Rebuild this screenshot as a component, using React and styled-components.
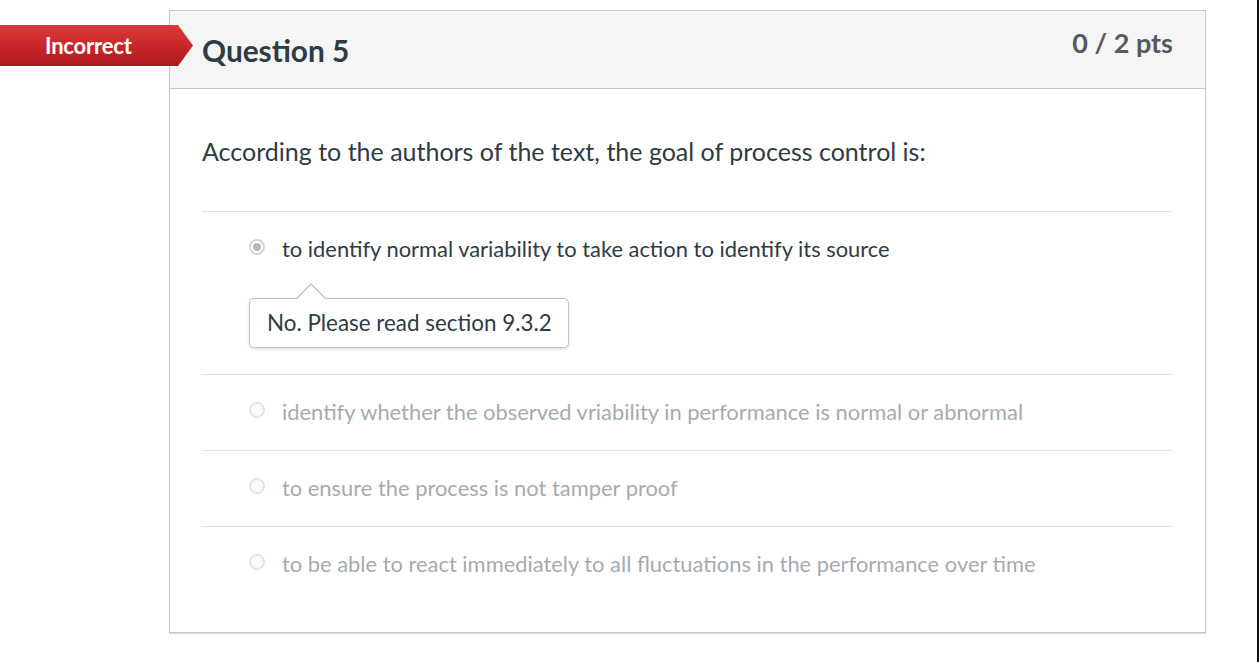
import React from 'react'
import styled, { createGlobalStyle } from 'styled-components'

const GlobalStyle = createGlobalStyle`
  html, body {
    margin: 0;
    padding: 0;
    background: #fff;
    font-family: Lato, "Open Sans", "Liberation Sans", sans-serif;
  }
  * { box-sizing: border-box; }
`

const Page = styled.div`
  position: relative;
  min-height: 100vh;
  border-right: 2px solid #111;
  padding-top: 10px;
`

const Badge = styled.div`
  position: absolute;
  top: 25px;
  left: 0;
  width: 193px;
  height: 41px;
  padding-left: 45px;
  display: flex;
  align-items: center;
  color: #fff;
  font-weight: 700;
  font-size: 22px;
  letter-spacing: -0.2px;
  background: linear-gradient(#dc3a3a, #c42426 60%, #a81c1e);
  clip-path: polygon(0 0, 178px 0, 193px 50%, 178px 100%, 0 100%);
  z-index: 2;
`

const Card = styled.div`
  margin-left: 169px;
  width: 1037px;
  border: 1px solid #c4c8cb;
  box-shadow: 0 1px 1px rgba(0, 0, 0, 0.12);
  background: #fff;
`

const Header = styled.div`
  height: 78px;
  background: #f5f5f5;
  border-bottom: 1px solid #c4c8cb;
  display: flex;
  justify-content: space-between;
  padding: 0 32px;
`

const Title = styled.h2`
  margin: 0;
  padding-top: 21px;
  font-size: 29.8px;
  font-weight: 700;
  color: #2d3b45;
  line-height: 38px;
`

const Points = styled.div`
  padding-top: 14px;
  font-size: 27px;
  font-weight: 700;
  color: #555a5e;
  line-height: 36px;
`

const Body = styled.div`
  padding: 47px 32px 30px;
`

const QuestionText = styled.p`
  margin: 0 0 45px;
  font-size: 25px;
  line-height: 30px;
  color: #2d3b45;
`

const AnswerRow = styled.div`
  border-top: 1px solid #e2e5e7;
  padding: 22px 0 ${p => (p.$tall ? '26px' : '25px')} 47px;
`

const AnswerLine = styled.div`
  display: flex;
  align-items: center;
  gap: 17px;
  height: 28px;
  font-size: 21.9px;
  color: ${p => (p.$selected ? '#2d3b45' : '#a5abaf')};
`

const Radio = styled.span`
  width: 16px;
  height: 16px;
  border-radius: 50%;
  flex: none;
  border: 2px solid ${p => (p.$selected ? '#d3d6d8' : '#e3e5e7')};
  background: ${p => (p.$selected ? '#fff' : '#fbfbfb')};
  display: flex;
  align-items: center;
  justify-content: center;
  margin-top: -2px;

  &::after {
    content: '';
    display: ${p => (p.$selected ? 'block' : 'none')};
    width: 8px;
    height: 8px;
    border-radius: 50%;
    background: #b5b9bc;
  }
`

const Comment = styled.div`
  position: relative;
  display: inline-block;
  margin: 36px 0 0 0;
  padding: 0 16px 0 17px;
  height: 50px;
  line-height: 48px;
  font-size: 22.4px;
  color: #2d3b45;
  background: #fff;
  border: 1px solid #bfc4c8;
  border-radius: 5px;
  box-shadow: 0 1px 3px rgba(0, 0, 0, 0.15);

  &::before,
  &::after {
    content: '';
    position: absolute;
    left: 46px;
    width: 0;
    height: 0;
    border-left: 15px solid transparent;
    border-right: 15px solid transparent;
  }
  &::before {
    top: -16px;
    border-bottom: 15px solid #bfc4c8;
  }
  &::after {
    top: -14px;
    border-bottom: 15px solid #fff;
  }
`

const answers = [
  { text: 'to identify normal variability to take action to identify its source', selected: true, comment: 'No. Please read section 9.3.2' },
  { text: 'identify whether the observed vriability in performance is normal or abnormal' },
  { text: 'to ensure the process is not tamper proof' },
  { text: 'to be able to react immediately to all fluctuations in the performance over time' },
]

export default function App() {
  return (
    <Page>
      <GlobalStyle />
      <Badge>Incorrect</Badge>
      <Card>
        <Header>
          <Title>Question 5</Title>
          <Points>0 / 2 pts</Points>
        </Header>
        <Body>
          <QuestionText>According to the authors of the text, the goal of process control is:</QuestionText>
          {answers.map((a, i) => (
            <AnswerRow key={i} $tall={!!a.comment}>
              <AnswerLine $selected={a.selected}>
                <Radio $selected={a.selected} />
                <span>{a.text}</span>
              </AnswerLine>
              {a.comment && <Comment>{a.comment}</Comment>}
            </AnswerRow>
          ))}
        </Body>
      </Card>
    </Page>
  )
}
